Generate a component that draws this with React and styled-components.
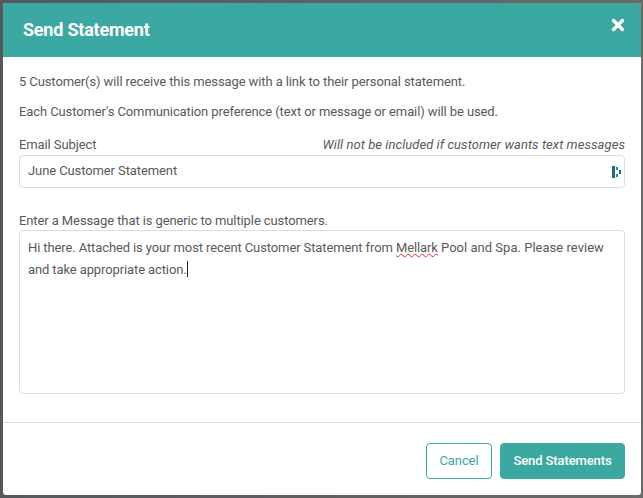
import React from 'react'
import styled, { createGlobalStyle } from 'styled-components'

const GlobalStyle = createGlobalStyle`
	html, body {
		margin: 0;
		padding: 0;
		background: #5c5c5c;
	}
	* {
		box-sizing: border-box;
	}
`

const Backdrop = styled.div`
	width: 643px;
	height: 498px;
	padding: 3px 2px 3px 3px;
	background: linear-gradient(90deg, #55585c 0%, #6a6a6a 100%);
	font-family: Roboto, 'Liberation Sans', sans-serif;
	overflow: hidden;
`
const Modal = styled.div`
	width: 638px;
	height: 492px;
	background: #fff;
	border-radius: 3px;
	display: flex;
	flex-direction: column;
	overflow: hidden;
`
const Header = styled.header`
	height: 54px;
	flex: none;
	background: #3ba8a1;
	color: #fff;
	padding: 0 16px 0 20px;
	display: flex;
	justify-content: space-between;
`
const Title = styled.h1`
	margin: 0;
	font-size: 18px;
	font-weight: 700;
	letter-spacing: -0.22px;
	line-height: 54px;
`
const Close = styled.button`
	border: 0;
	padding: 0;
	margin-top: 15px;
	width: 14px;
	height: 14px;
	background: none;
	color: #fff;
	display: block;
`
const Body = styled.div`
	flex: 1;
	padding: 17px 16px 0;
	color: #5a5a5a;
	font-size: 13px;
	line-height: 16px;
	letter-spacing: -0.1px;
`
const Note = styled.p`
	margin: 0 0 14px;
`
const LabelRow = styled.div`
	margin-top: 17px;
	height: 16px;
	display: flex;
	justify-content: space-between;
`
const Hint = styled.em`
	font-style: italic;
	letter-spacing: 0.06px;
`
const Field = styled.div`
	margin-top: 2px;
	border: 1px solid #dcdcdc;
	border-radius: 4px;
	padding: 0 3px 2px 8px;
	height: 33px;
	display: flex;
	align-items: center;
	justify-content: space-between;
`
const FieldIcon = styled.svg`
	margin-top: 2px;
`
const Label = styled.div`
	margin-top: 25px;
	height: 16px;
`
const MessageBox = styled.div`
	margin-top: 1px;
	border: 1px solid #dcdcdc;
	border-radius: 4px;
	padding: 6px 8px;
	height: 164px;
	line-height: 22px;
	letter-spacing: -0.11px;
`
const Misspelled = styled.span`
	text-decoration: underline wavy #d33;
	text-decoration-thickness: 1px;
	text-underline-offset: 1px;
`
const LooseText = styled.span`
	letter-spacing: 0.02px;
`
const Caret = styled.span`
	display: inline-block;
	width: 1px;
	height: 16px;
	background: #222;
	vertical-align: -3px;
`
const Footer = styled.footer`
	height: 73px;
	flex: none;
	border-top: 1px solid #dcdcdc;
	padding: 20px 16px 0;
	display: flex;
	justify-content: flex-end;
	gap: 8px;
`
const Button = styled.button`
	height: 36px;
	width: ${(p) => (p.$primary ? '125px' : '66px')};
	border: 1px solid #3ba8a1;
	border-radius: 4px;
	background: ${(p) => (p.$primary ? '#3ba8a1' : '#fff')};
	color: ${(p) => (p.$primary ? '#fff' : '#3ba8a1')};
	font-family: inherit;
	font-size: 13px;
	font-weight: ${(p) => (p.$primary ? 500 : 400)};
	letter-spacing: -0.1px;
	padding: 0 0 2px;
`

export default function App() {
	return (
		<Backdrop>
			<GlobalStyle />
			<Modal>
				<Header>
					<Title>Send Statement</Title>
					<Close aria-label="Close">
						<svg width="14" height="14" viewBox="0 0 14 14">
							<path
								d="M2.5 2.5 L11.5 11.5 M11.5 2.5 L2.5 11.5"
								stroke="currentColor"
								strokeWidth="3.4"
								strokeLinecap="round"
							/>
						</svg>
					</Close>
				</Header>
				<Body>
					<Note>5 Customer(s) will receive this message with a link to their personal statement.</Note>
					<Note>Each Customer's Communication preference (text or message or email) will be used.</Note>
					<LabelRow>
						<span>Email Subject</span>
						<Hint>Will not be included if customer wants text messages</Hint>
					</LabelRow>
					<Field>
						<span>June Customer Statement</span>
						<FieldIcon width="9" height="12" viewBox="0 0 9 12">
							<rect x="0" y="0" width="3" height="12" fill="#1f6f80" />
							<rect x="4" y="1" width="2" height="3" fill="#2d8ea0" />
							<rect x="4" y="8" width="2" height="3" fill="#2d8ea0" />
							<rect x="7" y="4" width="2" height="4" fill="#1f6f80" />
						</FieldIcon>
					</Field>
					<Label>Enter a Message that is generic to multiple customers.</Label>
					<MessageBox>
						Hi there. Attached is your most recent Customer Statement from <Misspelled>Mellark</Misspelled><LooseText> Pool and Spa. Please review</LooseText> and take appropriate action.<Caret />
					</MessageBox>
				</Body>
				<Footer>
					<Button>Cancel</Button>
					<Button $primary>Send Statements</Button>
				</Footer>
			</Modal>
		</Backdrop>
	)
}
